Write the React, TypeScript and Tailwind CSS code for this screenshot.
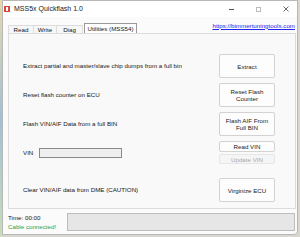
import React from 'react';

const font = { fontFamily: '"Liberation Sans", Arial, sans-serif' };

const Btn: React.FC<{ children: React.ReactNode; h?: string; disabled?: boolean }> = ({ children, h = 'h-[24px]', disabled }) => (
  <div
    className={`w-[56px] ${h} flex items-center justify-center text-center leading-[7px] rounded-[2px] border ${
      disabled ? 'bg-[#f5f5f5] border-[#e6e6e6] text-[#a8a8a8]' : 'bg-[#fdfdfd] border-[#d2d2d2] text-[#1a1a1a]'
    }`}
  >
    {children}
  </div>
);

const Row: React.FC<{ label: string; children: React.ReactNode }> = ({ label, children }) => (
  <div className="flex items-center justify-between">
    <span>{label}</span>
    {children}
  </div>
);

export default function App() {
  return (
    <div className="w-[300px] h-[237px] flex bg-[#d9d6cf] overflow-hidden text-[6.2px] text-[#161616]" style={font}>
      <div className="w-[2px] bg-gradient-to-b from-[#e6d9a6] via-[#9fc0d6] to-[#c9ddb8]" />
      <div className="w-[296px] h-[235px] flex flex-col bg-[#fbfbfb] border border-[#b8b8b8] rounded-br-[4px]">
        {/* title bar */}
        <div className="h-[16px] flex items-center bg-white">
          <div className="ml-[1px] w-[6px] h-[6px] bg-[#d9473b] flex items-center justify-center">
            <div className="w-[2px] h-[4px] bg-white" />
          </div>
          <span className="ml-[4px] text-[7px] text-[#222]">MSS5x Quickflash 1.0</span>
          <div className="ml-auto flex items-center gap-[22px] pr-[8px] text-[#444]">
            <div className="w-[5px] h-[1px] bg-[#555]" />
            <div className="w-[5px] h-[5px] border border-[#bbb]" />
            <svg width="6" height="6" viewBox="0 0 6 6">
              <path d="M0.5 0.5 L5.5 5.5 M5.5 0.5 L0.5 5.5" stroke="#444" strokeWidth="0.8" />
            </svg>
          </div>
        </div>

        {/* tabs */}
        <div className="mt-[6px] flex items-end pl-[5px] pr-[2px] h-[10px]">
          <div className="h-[8px] w-[26px] flex items-center justify-center border border-b-0 border-[#dcdcdc] bg-[#f7f7f7]">Read</div>
          <div className="h-[8px] w-[23px] flex items-center justify-center border border-b-0 border-l-0 border-[#dcdcdc] bg-[#f7f7f7]">Write</div>
          <div className="h-[8px] w-[26px] flex items-center justify-center border border-b-0 border-l-0 border-[#dcdcdc] bg-[#f7f7f7]">Diag</div>
          <div className="h-[10px] w-[53px] flex items-center justify-center border border-b-0 border-[#9a9a9a] bg-white ml-[1px]">Utilities (MSS54)</div>
          <a className="ml-auto mb-[3px] text-[#2424f0] underline">https://bimmertuningtools.com</a>
        </div>

        {/* panel */}
        <div className="ml-[5px] w-[288px] h-[176px] border border-[#dcdcdc] bg-[#f9f9f9] pl-[14px] pr-[20px] pt-[20px] flex flex-col">
          <Row label="Extract partial and master/slave chip dumps from a full bin">
            <Btn>Extract</Btn>
          </Row>
          <div className="mt-[5px]">
            <Row label="Reset flash counter on ECU">
              <Btn>Reset Flash<br />Counter</Btn>
            </Row>
          </div>
          <div className="mt-[5px]">
            <Row label="Flash VIN/AIF Data from a full BIN">
              <Btn>Flash AIF From<br />Full BIN</Btn>
            </Row>
          </div>
          <div className="mt-[5px] flex items-center justify-between">
            <div className="flex items-center">
              <span>VIN</span>
              <div className="ml-[6px] w-[83px] h-[10px] bg-[#efefef] border border-[#8a8a8a]" />
            </div>
            <div className="flex flex-col gap-[2px]">
              <Btn h="h-[11px]">Read VIN</Btn>
              <Btn h="h-[10px]" disabled>Update VIN</Btn>
            </div>
          </div>
          <div className="mt-[14px]">
            <Row label="Clear VIN/AIF data from DME (CAUTION)">
              <Btn>Virginize ECU</Btn>
            </Row>
          </div>
        </div>

        {/* status */}
        <div className="flex items-center pl-[5px] pr-[2px] mt-[4px]">
          <div className="flex flex-col leading-[9px] w-[59px]">
            <span>Time: 00:00</span>
            <span className="text-[#2ea043]">Cable connected!</span>
          </div>
          <div className="w-[228px] h-[18px] bg-[#e6e6e6] border border-[#bcbcbc]" />
        </div>
      </div>
    </div>
  );
}
